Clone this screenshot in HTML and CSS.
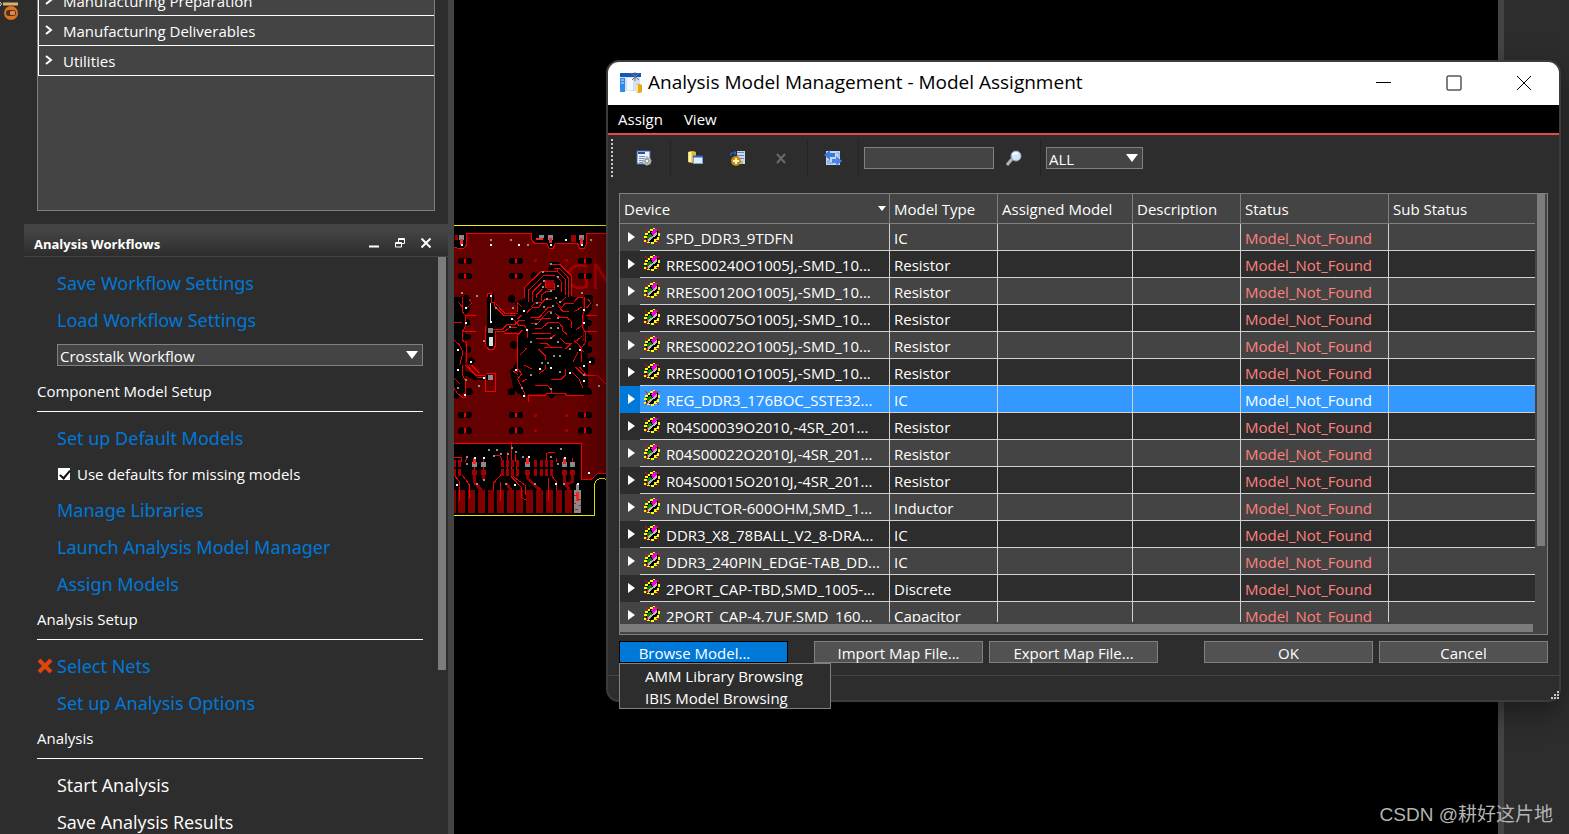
FILE: index.html
```
<!DOCTYPE html>
<html lang="en">
<head>
    <meta charset="UTF-8">
    <meta name="viewport" content="width=device-width, initial-scale=1.0">
    <title>Analysis Model Management</title>
    <link rel="stylesheet" href="styles.css">
</head>
<body>

    <!-- shared icons -->
    <svg class="defs" width="0" height="0">
        <symbol id="chip" viewBox="0 0 16 16">
            <path d="M2 7L8 2H13L14 4V8L8 14H4L2 12Z" fill="#000"/>
            <path d="M0 8h3v2H0zM1 5h3v2H1zM4 3h2v2H4zM6 1h3v2H6zM9 0h2v1H9zM0 12h3v2H0zM3 14h3v1H3zM14 5h2v3h-2zM13 9h2v3h-2zM10 11h3v3h-3zM7 14h3v2H7z" fill="#ffff00"/>
            <path d="M7 4L10 1H13V4L9 8Z" fill="#ee00dd"/>
            <path d="M3 9L6 5L8 8L5 11H3Z" fill="#008a10"/>
            <path d="M4 13L13 5" stroke="#b8b8b8" stroke-width="2"/>
            <path d="M1 1L4 4M12 12L15 15M15 1L12 4M5 10L1 15" stroke="#e81010" stroke-width="1"/>
        </symbol>
        <symbol id="pads" viewBox="0 0 42 26">
            <circle cx="10" cy="13" r="10"/><circle cx="32" cy="13" r="10"/>
            <path d="M0 9h42v2H0zM0 16h42v2H0z" opacity=".7"/>
            <path d="M18 6h6v14h-6z" fill="#f00000"/>
        </symbol>
    </svg>

    <aside class="strip">
        <svg width="20" height="24" viewBox="0 0 20 24">
            <path d="M3 4H18" stroke="#dcb06c" stroke-width="3"/>
            <path d="M0 2Q3 4 0 6" fill="none" stroke="#ddd" stroke-width="1"/>
            <circle cx="11" cy="13" r="7" fill="#d87422"/>
            <rect x="6" y="10" width="10" height="6" rx="3" fill="#4a3324"/>
            <rect x="10" y="11" width="5" height="4" rx="1" fill="#e88a36"/>
        </svg>
    </aside>

    <div class="dock">
        <div class="tree">
            <div class="tree-row"><svg width="8" height="10"><path d="M1 1L6 5L1 9"/></svg>Manufacturing Preparation</div>
            <div class="tree-row"><svg width="8" height="10"><path d="M1 1L6 5L1 9"/></svg>Manufacturing Deliverables</div>
            <div class="tree-row"><svg width="8" height="10"><path d="M1 1L6 5L1 9"/></svg>Utilities</div>
        </div>

        <div class="panel-title">
            <h2>Analysis Workflows</h2>
            <button aria-label="Minimize"><svg width="10" height="10"><path d="M0 8.500H10" stroke-width="2"/></svg></button>
            <button aria-label="Float"><svg width="10" height="10"><path d="M3.500 4V.500H9.500V5.500H7M3 1.500H9M.500 4.500H6.500V9H.500ZM0 5.500H6"/></svg></button>
            <button aria-label="Close"><svg width="10" height="10"><path d="M.500 .500L9.500 9.500M9.500 .500L.500 9.500" stroke-width="2"/></svg></button>
        </div>

        <div class="workflow">
            <div class="workflow-list">
                <a href="#">Save Workflow Settings</a>
                <a href="#">Load Workflow Settings</a>
                <div class="select workflow-select">
                    <select aria-label="Workflow"><option>Crosstalk Workflow</option></select>
                </div>

                <h3>Component Model Setup</h3>
                <a href="#">Set up Default Models</a>
                <label class="check"><input type="checkbox" checked>Use defaults for missing models</label>
                <a href="#">Manage Libraries</a>
                <a href="#">Launch Analysis Model Manager</a>
                <a href="#">Assign Models</a>

                <h3>Analysis Setup</h3>
                <a href="#" class="failed"><svg width="16" height="16"><path d="M2 2L14 14M14 2L2 14"/></svg>Select Nets</a>
                <a href="#">Set up Analysis Options</a>

                <h3>Analysis</h3>
                <a href="#" class="plain">Start Analysis</a>
                <a href="#" class="plain">Save Analysis Results</a>
            </div>
            <div class="scrollbar"><div class="thumb"></div></div>
        </div>
    </div>

    <main class="canvas">
        <!-- board artwork, three units per pixel -->
        <svg class="board" width="170" height="310" viewBox="27 0 510 930">
            <path class="copper" d="M0 97H35L40 100H57L64 90V56H258V72L266 86H306L312 100H325L330 86H398L404 100H418L424 88V56H560V775H455L440 792H410V685H0Z"/>
            <text class="net" x="360" y="223">GND</text>

            <!-- cleared areas -->
            <path d="M238 250V222L290 168H308L316 140H340L380 180V246H412L420 540H330L318 552L305 538H250L236 548L216 532L204 520L196 470L216 440V292L210 262Z"/>
            <path d="M0 245H66L82 262L72 290L60 300V530L38 552L0 540Z"/>
            <path d="M126 236H148V262L178 296H218V352H150V392L138 404L124 392Z"/>
            <path d="M0 460H45L92 480H130V496H88L58 480Z"/>
            <path d="M416 240H436L444 262L430 300V530L418 540Z"/>
            <g class="vias">
                <circle cx="200" cy="252" r="11"/><circle cx="206" cy="390" r="11"/><circle cx="267" cy="182" r="10"/>
                <circle cx="64" cy="250" r="10"/><circle cx="66" cy="322" r="10"/><circle cx="68" cy="366" r="10"/><circle cx="68" cy="404" r="10"/><circle cx="78" cy="438" r="11"/><circle cx="72" cy="530" r="11"/>
                <circle cx="434" cy="250" r="10"/><circle cx="430" cy="280" r="10"/><circle cx="432" cy="324" r="10"/><circle cx="432" cy="368" r="10"/><circle cx="432" cy="404" r="10"/><circle cx="440" cy="438" r="11"/><circle cx="430" cy="530" r="11"/><circle cx="206" cy="470" r="11"/><circle cx="200" cy="530" r="11"/>
            </g>
            <use href="#pads" x="39" y="125" width="42" height="26"/><use href="#pads" x="39" y="170" width="42" height="26"/>
            <use href="#pads" x="190" y="125" width="46" height="26"/><use href="#pads" x="190" y="170" width="46" height="26"/>
            <use href="#pads" x="397" y="125" width="46" height="26"/><use href="#pads" x="397" y="170" width="46" height="26"/>
            <use href="#pads" x="39" y="587" width="42" height="26"/><use href="#pads" x="39" y="634" width="42" height="26"/>
            <use href="#pads" x="190" y="587" width="46" height="26"/><use href="#pads" x="190" y="634" width="46" height="26"/>
            <use href="#pads" x="397" y="587" width="46" height="26"/><use href="#pads" x="397" y="634" width="46" height="26"/>
            <path class="shape" d="M267 132h9v8h-9zM360 132h9v8h-9zM267 597h9v8h-9zM360 597h9v8h-9zM267 642h9v8h-9zM360 642h9v8h-9zM30 60h9v14h-9zM378 60h15v20h-15zM303 196h24v24h-24z"/>

            <!-- outlines and traces -->
            <path class="trace" d="M27 97L40 100H57L64 90V56H258V72L270 86H306L312 100H325L330 86H398L404 100H418L424 88V56H540M27 685H410V792H440L458 776H540"/>
            <path class="trace" d="M238 250V218L290 168H338V158M250 262V226L298 180H330M262 262V232L290 204M274 250V240L292 222M320 148H344L380 184V244M326 160H344L370 188V246M340 172L360 192V240M332 182L350 200V232M302 196V216L312 224H328V204M316 228H306L290 240V258"/>
            <path class="trace" d="M126 246V234H138V262L148 262V272L178 302H212M152 266L178 294H218M122 334V392L132 404H146L152 390V350H178L196 336H216M138 344H170L186 328H210L222 316H240M204 312L220 330H236L248 344V370M178 354H218V470"/>
            <path class="trace" d="M216 292V262L230 274M258 276L272 262H292L300 254H322M246 292L264 276H282L290 264M254 306H284L310 276H322M270 314H286L310 290H322M258 326H276L294 310H318M270 340H290L310 322H340L352 336V346L366 358M262 354H318M274 370H318L334 356M284 384H304L318 396M296 398H352M334 262L350 278L360 264H386M340 274L352 288H372M330 294L346 308H366L380 320V340M346 262L364 246M362 402L380 384M280 402L302 424V436M344 368L360 384H376M386 262L398 248H414M388 290L410 276M392 346L412 330M394 378L412 362M230 300L218 312M232 346L218 360M244 400L226 420"/>
            <path class="trace" d="M52 246V290L60 300V336L52 350V376L64 384V440M60 301H92M54 349H92M27 376L44 390L54 410L44 450M40 262L52 276M27 322H52M72 252L80 264L66 280M418 246V290L412 302V336L420 350V384L410 398V440M424 301H456M418 349H456M386 376L402 390L416 412M400 410L384 440M428 252L438 264L424 280"/>
            <path class="trace" d="M60 450L92 480H122V528H152V476H122M66 450L98 488H124M80 450L104 474M27 520L38 536L52 546H62V500L52 480V450M27 490L44 506M218 460L230 476L218 494L232 520L242 544M204 468L220 480M250 560V542H300L306 534H358L364 540H416M270 512H308L318 524V534M318 492H350L362 480V462M320 494H336M300 450V462L282 476M392 456L416 480H452M404 456L424 480M380 470L402 492L414 520M484 232V404M484 232H492M456 480L484 508V528M236 450L262 462M232 500L246 492"/>
            <path class="trace" d="M27 728H40L50 726V740M60 740L66 728M88 728V810M116 728V770M148 722H164L172 736V752M186 710V740M200 682V746M212 718V740M304 736V716L314 712H330M334 728V740M27 780L44 800V858M52 780L72 808V854M144 858V806L176 770M166 800V858M186 780V750M200 752V786L230 818V848L254 860M204 784L242 812V840M214 780V750M310 790V858M318 780L334 800V852M358 750V730M382 728V744"/>
            <path class="wide" d="M88 780V800L110 826V858M116 780V794M184 806L196 822V858M248 780V790L284 824V858M358 780V806L370 818V858M382 780V800L372 806H360"/>

            <!-- small components -->
            <path class="grey" d="M42 60h15v14H42zM282 60h14v10h-14zM308 60h16v14h-16zM402 60h16v14h-16zM130 338h14v16h-14zM128 480h16v14h-16zM82 740h14v15H82zM108 740h15v15h-15zM240 740h15v15h-15zM351 740h15v15h-15zM375 740h15v15h-15zM387 825h21v68H387zM393 806h9v22h-9z"/>
            <path class="light" d="M132 366h12v28h-12zM134 264h4v60h-4z"/>
            <path class="hot" d="M44 72h10v18H44zM272 68h22v8h-22zM312 70h10v14h-10zM406 70h8v20h-8zM84 730h9v18H84zM243 728h9v20h-9zM354 730h9v18h-9zM393 832h9v26h-9z"/>
            <path class="shape" d="M168 735h9v20h-9zM183 735h9v20h-9zM198 735h9v20h-9zM213 735h9v20h-9zM267 735h9v20h-9zM285 735h9v20h-9zM300 735h9v20h-9zM315 735h9v20h-9zM28 735h6v20h-6zM39 735h9v20h-9zM28 762h6v20h-6zM39 762h9v20h-9zM81 765h15v15H81zM108 765h15v15h-15zM168 762h9v20h-9zM183 762h9v20h-9zM198 762h9v20h-9zM213 762h9v20h-9zM240 765h15v15h-15zM267 762h9v20h-9zM285 762h9v20h-9zM300 762h9v20h-9zM315 762h9v20h-9zM351 765h15v15h-15zM375 765h15v15h-15z"/>
            <path class="finger" d="M27 825h6v68h-6zM39 825h21v68H39zM69 825h21v68H69zM99 825h21v68H99zM130 825h18v68h-18zM156 825h21v68h-21zM186 825h21v68h-21zM213 825h21v68h-21zM243 825h21v68h-21zM273 825h21v68h-21zM303 825h21v68h-21zM333 825h18v68h-18zM360 825h21v68h-21z"/>
            <path class="hot-line" d="M387 840h9M399 852h9M387 864h6M402 872h6M390 884h9M44 825v33M72 825v28M166 825v33M230 825v24M310 825v33"/>

            <path class="dots-white" d="M138 90h.1M222 90h.1M50 90h.1M318 90h.1M362 75h.1M410 90h.1M138 242h.1M138 322h.1M201 312h.1M237 288h.1M64 323h.1M64 279h.1M78 440h.1M40 404h.1M247 346h.1M418 323h.1M416 286h.1M434 440h.1M404 404h.1M116 488h.1M38 466h.1M212 466h.1M318 460h.1M376 474h.1M286 462h.1M416 498h.1M60 540h.1M238 544h.1M90 728h.1M116 728h.1M252 726h.1M36 810h.1M210 809h.1M333 807h.1M432 773h.1M398 806h.1M360 728h.1M416 452h.1"/>
            <path class="dots-grey" d="M138 74h.1M198 74h.1M248 90h.1M438 75h.1M50 234h.1M96 242h.1M153 279h.1M204 279h.1M195 336h.1M117 378h.1M294 172h.1M318 147h.1M339 186h.1M296 198h.1M294 216h.1M339 214h.1M318 228h.1M306 252h.1M333 248h.1M276 264h.1M346 262h.1M324 272h.1M298 276h.1M318 294h.1M340 309h.1M272 326h.1M318 338h.1M339 340h.1M318 369h.1M339 382h.1M375 402h.1M258 382h.1M327 422h.1M345 422h.1M291 443h.1M309 443h.1M456 270h.1M410 234h.1M102 512h.1M318 522h.1M258 480h.1M346 472h.1M40 520h.1M62 496h.1M232 520h.1M416 480h.1M462 512h.1M132 705h.1M156 705h.1M147 723h.1M168 717h.1M189 717h.1M200 699h.1M213 711h.1M348 702h.1M66 726h.1M66 746h.1M234 726h.1M318 726h.1M339 746h.1M184 806h.1M96 806h.1M270 806h.1M117 794h.1M358 806h.1"/>

            <path class="outline" d="M0 31H560M0 901H449V812Q449 791 470 791Q486 791 489 800V812H560"/>
        </svg>
    </main>

    <aside class="right-dock"></aside>

    <section class="dialog" role="dialog" aria-labelledby="dialog-title">
        <header class="title-bar">
            <svg width="24" height="22" viewBox="0 0 24 22">
                <rect x="1" y="1" width="20" height="18" fill="#d3e0f5"/>
                <rect x="1" y="1" width="21" height="4" fill="#1459b8"/>
                <path d="M1 6H6V20H1Z" fill="#2f8ae8"/>
                <path d="M2 8H5M2 11H5" stroke="#cfe6ff"/>
                <path d="M8 6H14V18H8Z" fill="#f4f8ff"/>
                <path d="M12 1L20 8M20 1L13 8M16 0V9" stroke="#6c7078" stroke-width="1"/>
                <path d="M17 13Q20 11 23 13V20Q20 22 17 20Z" fill="#e3a91c"/>
                <path d="M18 13V20" stroke="#ffe48a" stroke-width="2"/>
            </svg>
            <h1 id="dialog-title">Analysis Model Management - Model Assignment</h1>
            <button aria-label="Minimize"><svg width="16" height="16"><path d="M0 7.500H15"/></svg></button>
            <button aria-label="Maximize"><svg width="16" height="16"><rect x="1" y="1" width="14" height="14" rx="1"/></svg></button>
            <button aria-label="Close"><svg width="16" height="16"><path d="M1 1L15 15M15 1L1 15"/></svg></button>
        </header>

        <nav class="menu-bar">
            <button>Assign</button>
            <button>View</button>
        </nav>

        <div class="toolbar">
            <div class="grip"></div>
            <button class="tool" aria-label="Preferences"><svg width="16" height="16">
                <rect x="1" y="1" width="13" height="13" fill="#eef3fb" stroke="#3d63a8"/>
                <path d="M2 3H9" stroke="#2b4fa0" stroke-width="2"/>
                <path d="M3 6.500H9M3 8.500H8M3 10.500H7M3 12.500H7" stroke="#6f8fc4"/>
                <circle cx="11" cy="11" r="4" fill="#c9c9c4"/><path d="M11 6V16M6 11H16M8 8L14 14M14 8L8 14" stroke="#a3a39e"/><circle cx="11" cy="11" r="2" fill="#efefec" stroke="#888"/>
            </svg></button>
            <hr>
            <button class="tool" aria-label="Browse library"><svg width="16" height="16">
                <path d="M1 2Q5 0 9 2V12Q5 14 1 12Z" fill="#e8b730"/><path d="M3 2V12" stroke="#fff2b0" stroke-width="3"/>
                <rect x="6.500" y="6.500" width="9" height="7" fill="#e4edff" stroke="#7ba2e4"/><path d="M6 6.500H16" stroke="#2b62c8" stroke-width="2"/>
            </svg></button>
            <button class="tool" aria-label="Create model"><svg width="16" height="16">
                <rect x="7" y="1" width="8" height="13" fill="#c9d8ee"/><path d="M7 2.500H14M7 5.500H14M9 8.500H14" stroke="#6f86ac"/>
                <path d="M1 6V3H5M4 1L6 3L4 5" fill="none" stroke="#2c6be0"/>
                <circle cx="6" cy="11" r="5" fill="#c98a16"/><path d="M6 8V14M3 11H9" stroke="#fff6c0" stroke-width="2"/><path d="M12 11V14" stroke="#6cb52c"/>
            </svg></button>
            <button class="tool" aria-label="Delete" disabled><svg width="16" height="16"><path d="M4 4L12 13M12 4L4 13" stroke="#6a6a6a" stroke-width="2"/></svg></button>
            <hr>
            <button class="tool" aria-label="Refresh"><svg width="18" height="16">
                <rect x="2" y="1" width="14" height="14" fill="#c4d6f4"/>
                <path d="M0 5L6 0V3H11V7H6V10Z" fill="#3d78e0"/><path d="M3 10V14H9V12H6V10Z" fill="#8fb4f0"/>
                <path d="M18 11L12 6V9H8V13H12V16Z" fill="#4a84e6"/><path d="M12 3H15V7" fill="none" stroke="#7ba2e8" stroke-width="1"/>
            </svg></button>
            <hr>
            <input type="text" class="search" aria-label="Search">
            <button class="tool find" aria-label="Find"><svg width="16" height="16">
                <path d="M1 15L6 9" stroke="#b8b0a8" stroke-width="3"/>
                <circle cx="10" cy="6" r="5" fill="#cfe5fb" stroke="#9aa4b2" stroke-width="1"/><path d="M7 5Q9 2 12 4" stroke="#fff" stroke-width="2" fill="none"/>
            </svg></button>
            <hr>
            <div class="select filter"><select aria-label="Filter"><option>ALL</option></select></div>
        </div>

        <div class="table-box">
            <div class="table-scroll">
                <table>
                    <colgroup>
                        <col class="col-device"><col class="col-type"><col class="col-model"><col class="col-desc"><col class="col-status"><col>
                    </colgroup>
                    <thead>
                        <tr><th class="sorted">Device</th><th>Model Type</th><th>Assigned Model</th><th>Description</th><th>Status</th><th>Sub Status</th></tr>
                    </thead>
                    <tbody>
                        <tr><td><div class="device"><i></i><span><svg><use href="#chip"/></svg>SPD_DDR3_9TDFN</span></div></td><td>IC</td><td></td><td></td><td>Model_Not_Found</td><td></td></tr>
                        <tr><td><div class="device"><i></i><span><svg><use href="#chip"/></svg>RRES00240O1005J,-SMD_10...</span></div></td><td>Resistor</td><td></td><td></td><td>Model_Not_Found</td><td></td></tr>
                        <tr><td><div class="device"><i></i><span><svg><use href="#chip"/></svg>RRES00120O1005J,-SMD_10...</span></div></td><td>Resistor</td><td></td><td></td><td>Model_Not_Found</td><td></td></tr>
                        <tr><td><div class="device"><i></i><span><svg><use href="#chip"/></svg>RRES00075O1005J,-SMD_10...</span></div></td><td>Resistor</td><td></td><td></td><td>Model_Not_Found</td><td></td></tr>
                        <tr><td><div class="device"><i></i><span><svg><use href="#chip"/></svg>RRES00022O1005J,-SMD_10...</span></div></td><td>Resistor</td><td></td><td></td><td>Model_Not_Found</td><td></td></tr>
                        <tr><td><div class="device"><i></i><span><svg><use href="#chip"/></svg>RRES00001O1005J,-SMD_10...</span></div></td><td>Resistor</td><td></td><td></td><td>Model_Not_Found</td><td></td></tr>
                        <tr class="selected"><td><div class="device"><i></i><span><svg><use href="#chip"/></svg>REG_DDR3_176BOC_SSTE32...</span></div></td><td>IC</td><td></td><td></td><td>Model_Not_Found</td><td></td></tr>
                        <tr><td><div class="device"><i></i><span><svg><use href="#chip"/></svg>R04S00039O2010,-4SR_201...</span></div></td><td>Resistor</td><td></td><td></td><td>Model_Not_Found</td><td></td></tr>
                        <tr><td><div class="device"><i></i><span><svg><use href="#chip"/></svg>R04S00022O2010J,-4SR_201...</span></div></td><td>Resistor</td><td></td><td></td><td>Model_Not_Found</td><td></td></tr>
                        <tr><td><div class="device"><i></i><span><svg><use href="#chip"/></svg>R04S00015O2010J,-4SR_201...</span></div></td><td>Resistor</td><td></td><td></td><td>Model_Not_Found</td><td></td></tr>
                        <tr><td><div class="device"><i></i><span><svg><use href="#chip"/></svg>INDUCTOR-600OHM,SMD_1...</span></div></td><td>Inductor</td><td></td><td></td><td>Model_Not_Found</td><td></td></tr>
                        <tr><td><div class="device"><i></i><span><svg><use href="#chip"/></svg>DDR3_X8_78BALL_V2_8-DRA...</span></div></td><td>IC</td><td></td><td></td><td>Model_Not_Found</td><td></td></tr>
                        <tr><td><div class="device"><i></i><span><svg><use href="#chip"/></svg>DDR3_240PIN_EDGE-TAB_DD...</span></div></td><td>IC</td><td></td><td></td><td>Model_Not_Found</td><td></td></tr>
                        <tr><td><div class="device"><i></i><span><svg><use href="#chip"/></svg>2PORT_CAP-TBD,SMD_1005-...</span></div></td><td>Discrete</td><td></td><td></td><td>Model_Not_Found</td><td></td></tr>
                        <tr><td><div class="device"><i></i><span><svg><use href="#chip"/></svg>2PORT_CAP-4.7UF,SMD_160...</span></div></td><td>Capacitor</td><td></td><td></td><td>Model_Not_Found</td><td></td></tr>
                    </tbody>
                </table>
            </div>
            <div class="v-thumb"></div>
            <div class="h-thumb"></div>
        </div>

        <div class="actions">
            <div class="browse">
                <button class="primary" aria-haspopup="menu" aria-expanded="true">Browse Model...</button>
                <div class="popup" role="menu">
                    <button role="menuitem">AMM Library Browsing</button>
                    <button role="menuitem">IBIS Model Browsing</button>
                </div>
            </div>
            <button>Import Map File...</button>
            <button>Export Map File...</button>
            <button class="ok">OK</button>
            <button>Cancel</button>
        </div>

        <footer class="status-bar">
            <svg width="9" height="9"><path d="M7 0h2v2H7zM4 3h2v2H4zM7 3h2v2H7zM1 6h2v2H1zM4 6h2v2H4zM7 6h2v2H7z" fill="#c8c8c8"/></svg>
        </footer>
    </section>

    <div class="watermark">CSDN @耕好这片地</div>

</body>
</html>
```

FILE: styles.css
```
* {
    box-sizing: border-box;
}

body {
    margin: 0;
    height: 100vh;
    display: flex;
    overflow: hidden;
    position: relative;
    background: #2d2d2d;
    color: #fff;
    font: 15px/22px "Open Sans", "Noto Sans CJK SC", sans-serif;
}

button, input, select {
    font: inherit;
    color: inherit;
    margin: 0;
    padding: 0;
    border: 0;
    background: none;
}

h1, h2, h3 {
    margin: 0;
    font-weight: normal;
}

svg {
    display: block;
    flex: none;
}

.defs {
    position: absolute;
}

/* --- left side --- */

.strip {
    width: 24px;
    flex: none;
}

.dock {
    width: 424px;
    flex: none;
    display: flex;
    flex-direction: column;
}

/* list is scrolled, so it starts above the window edge */
.tree {
    flex: none;
    height: 226px;
    margin: -15px 13px 13px;
    border: 1px solid #808080;
    background: #444;
}

.tree-row {
    display: flex;
    align-items: center;
    gap: 10px;
    height: 30px;
    padding-left: 6px;
    border-left: 1px solid #fff;
    border-bottom: 1px solid #fff;
}

.tree-row svg {
    margin-bottom: 2px;
    fill: none;
    stroke: #fff;
    stroke-width: 2;
}

.panel-title {
    flex: none;
    display: flex;
    align-items: center;
    gap: 16px;
    height: 33px;
    padding: 8px 17px 0 10px;
    background: linear-gradient(#444 20%, #2d2d2d);
    border-bottom: 1px solid #444;
}

.panel-title h2 {
    flex: 1;
    font-size: 13px;
    font-weight: bold;
}

.panel-title svg {
    margin-bottom: 2px;
    fill: none;
    stroke: #fff;
}

.workflow {
    flex: 1;
    min-height: 0;
    display: flex;
}

.workflow-list {
    flex: 1;
    padding: 8px 15px 0 13px;
    overflow: hidden;
}

.workflow-list a {
    display: block;
    padding-left: 20px;
    font-family: "Noto Sans", sans-serif;
    font-size: 18px;
    line-height: 37px;
    color: #0078d7;
    text-decoration: none;
}

.workflow-list a.plain {
    color: #fff;
    font-family: "Open Sans", sans-serif;
}

.workflow-list a.failed {
    display: flex;
    align-items: center;
    gap: 4px;
    padding-left: 0;
}

.failed svg {
    margin-bottom: 2px;
    stroke: #e0430c;
    stroke-width: 4;
}

.workflow-list h3 {
    margin: 1px 0 8px;
    padding-bottom: 5px;
    border-bottom: 1px solid #fff;
    font-size: 15px;
    line-height: 30px;
}

.select {
    position: relative;
    height: 22px;
    border: 1px solid #808080;
    background: #444;
}

.select select {
    display: block;
    width: 100%;
    height: 20px;
    padding: 1px 0 0 2px;
    appearance: none;
    line-height: 20px;
}

.select::after {
    content: "";
    position: absolute;
    right: 4px;
    top: 6px;
    border: 6px solid transparent;
    border-top: 8px solid #fff;
    border-bottom: 0;
    pointer-events: none;
}

.workflow-select {
    margin: 5px 0 10px 20px;
}

.check {
    display: flex;
    align-items: center;
    gap: 7px;
    height: 35px;
    padding: 0 0 2px 21px;
}

.check input {
    width: 12px;
    height: 12px;
    appearance: none;
    background: #fff;
}

.check input:checked::after {
    content: "";
    display: block;
    width: 4px;
    height: 9px;
    margin-left: 4px;
    border: solid #111;
    border-width: 0 2px 2px 0;
    transform: rotate(40deg);
}

.scrollbar {
    width: 10px;
}

.thumb {
    width: 8px;
    height: 413px;
    background: #7c7c7c;
}

/* --- board view --- */

.canvas {
    flex: 1;
    background: #000;
    border: solid #444;
    border-width: 0 6px;
}

.board {
    margin-top: 215px;
    shape-rendering: crispEdges;
}

.copper { fill: #640000; }
.net { font-size: 104px; fill: #a80000; }
.shape { fill: #a00000; }
.finger { fill: #800000; }
.grey { fill: #8a8a8a; }
.light { fill: #e0e0e0; }
.hot { fill: #f02828; }

.trace, .outline, .wide, .hot-line {
    fill: none;
    stroke: #f00000;
    stroke-width: 3;
}

.outline { stroke: #f0f000; }
.wide { stroke: #900000; stroke-width: 9; }

.dots-white, .dots-grey {
    stroke: #fff;
    stroke-width: 6;
    stroke-linecap: square;
}

.dots-grey { stroke: #909090; }

.right-dock {
    width: 65px;
    flex: none;
}

/* --- dialog window --- */

.dialog {
    position: absolute;
    left: 606px;
    top: 60px;
    right: 8px;
    bottom: 132px;
    display: flex;
    flex-direction: column;
    border: 2px solid #3c3c3c;
    border-radius: 13px;
    background: #2d2d2d;
    box-shadow: 0 10px 30px rgba(0, 0, 0, 0.4);
}

.title-bar {
    display: flex;
    align-items: center;
    height: 43px;
    padding: 0 0 2px 11px;
    border-radius: 11px 11px 0 0;
    background: #fff;
    color: #000;
}

.title-bar h1 {
    flex: 1;
    margin-left: 5px;
    padding-bottom: 2px;
    font-size: 19px;
}

.title-bar button {
    width: 70px;
    display: flex;
    justify-content: center;
}

.title-bar button svg {
    fill: none;
    stroke: #000;
}

.menu-bar {
    display: flex;
    gap: 21px;
    height: 30px;
    padding: 0 10px;
    background: #000;
    border-bottom: 2px solid #e8494a;
}

.toolbar {
    display: flex;
    align-items: center;
    height: 58px;
    padding-bottom: 12px;
}

.grip {
    width: 2px;
    height: 38px;
    margin: 0 23px 0 3px;
    background: repeating-linear-gradient(#c8c8c8 0 2px, transparent 2px 4px);
}

.tool {
    width: 18px;
    margin-right: 25px;
}

.toolbar hr {
    width: 1px;
    height: 36px;
    margin: 0 16px 0 -9px;
    border: 0;
    background: #242424;
}

.search {
    width: 130px;
    height: 22px;
    margin: 0 12px 0 -11px;
    border: 1px solid #808080;
    background: #444;
}

.filter {
    width: 97px;
    margin-left: -11px;
}

.table-box {
    flex: 1;
    min-height: 0;
    display: grid;
    grid-template-columns: 1fr 8px;
    grid-template-rows: 1fr 8px;
    gap: 2px;
    margin: 0 11px;
    padding: 0 2px 2px 0;
    border: 1px solid #808080;
    background: #444;
}

.table-scroll {
    overflow: hidden;
}

.v-thumb {
    height: 352px;
    background: #7c7c7c;
}

.h-thumb {
    margin-right: 2px;
    background: #7c7c7c;
}

table {
    width: 100%;
    table-layout: fixed;
    border-spacing: 0;
}

.col-device { width: 270px; }
.col-type, .col-desc { width: 108px; }
.col-model { width: 135px; }
.col-status { width: 148px; }

th, td {
    height: 27px;
    padding: 0 4px;
    border-right: 1px solid #d0d0d0;
    border-bottom: 1px solid #d0d0d0;
    text-align: left;
    font-weight: normal;
    white-space: nowrap;
}

th {
    position: relative;
    height: 30px;
    border-color: #808080;
}

th:last-child, td:last-child {
    border-right: 0;
}

.sorted::after {
    content: "";
    position: absolute;
    right: 3px;
    top: 12px;
    border: 4px solid transparent;
    border-top: 5px solid #fff;
    border-bottom: 0;
}

tbody tr:nth-child(even) {
    background: #2d2d2d;
}

tbody tr.selected {
    background: #3399ff;
}

td {
    padding-top: 2px;
}

td:first-child {
    padding: 0;
    border-bottom: 0;
}

td:nth-child(5) {
    color: #ff807c;
}

.selected td:nth-child(5) {
    color: #fff;
}

.device {
    display: flex;
}

.device i {
    width: 20px;
    padding: 8px 0 0 8px;
}

.selected i {
    background: #0078d7;
}

.device i::before {
    content: "";
    display: block;
    width: 0;
    border: 5px solid transparent;
    border-left: 7px solid #fff;
    border-right: 0;
}

.device span {
    flex: 1;
    display: flex;
    align-items: center;
    gap: 6px;
    height: 27px;
    padding: 2px 0 0 4px;
    border-bottom: 1px solid #d0d0d0;
    overflow: hidden;
}

.device svg {
    width: 16px;
    height: 16px;
    margin-bottom: 4px;
    fill: none;
    shape-rendering: crispEdges;
}

.actions {
    display: flex;
    gap: 6px;
    padding: 6px 11px 12px;
    border-bottom: 1px solid #444;
}

.actions > button, .primary {
    display: block;
    width: 169px;
    height: 22px;
    padding-top: 2px;
    border: 1px solid #808080;
    background: #525252;
    line-height: 18px;
}

.actions .primary {
    padding-right: 18px;
    border-color: #000;
    background: #0078d7;
}

.browse {
    position: relative;
    margin-right: 20px;
}

.actions .ok {
    margin-left: auto;
}

.popup {
    position: absolute;
    top: 100%;
    left: 0;
    display: flex;
    flex-direction: column;
    width: 212px;
    border: 1px solid #808080;
    background: #2d2d2d;
}

.popup button {
    height: 22px;
    padding: 2px 0 0 25px;
    line-height: 20px;
    text-align: left;
}

.status-bar {
    display: flex;
    justify-content: flex-end;
    align-items: flex-end;
    height: 24px;
}

.watermark {
    position: absolute;
    right: 16px;
    bottom: 8px;
    font-family: "Liberation Sans", "Noto Sans CJK SC", sans-serif;
    font-size: 19px;
    color: #b4b4b4;
}
```
